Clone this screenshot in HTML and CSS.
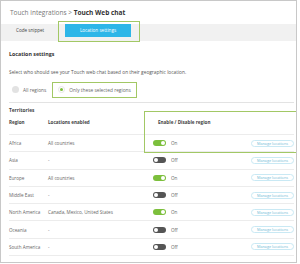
FILE: index.html
```html
<!DOCTYPE html>
<html>
<head>
<meta charset="utf-8">
<link rel="stylesheet" href="styles.css">
</head>
<body>
<div class="frame">
  <div class="title">Touch integrations &gt; <b>Touch Web chat</b></div>
  <div class="tabs">
    <div class="tab">Code snippet</div>
    <div class="tab active">Location settings</div>
  </div>
  <div class="content">
    <div class="h">Location settings</div>
    <div class="desc">Select who should see your Touch web chat based on their geographic location.</div>
    <div class="radios">
      <div class="radio"><span class="dot"></span>All regions</div>
      <div class="radio"><span class="dot on"></span>Only these selected regions</div>
    </div>
    <div class="sep"></div>
    <div class="h2">Territories</div>
    <div class="table">
      <div class="row head"><span class="c1">Region</span><span class="c2">Locations enabled</span><span class="c3">Enable / Disable region</span></div>
      <div class="row"><span class="c1">Africa</span><span class="c2">All countries</span><span class="c3"><span class="tog on"></span>On</span><span class="btn">Manage locations</span></div>
      <div class="row"><span class="c1">Asia</span><span class="c2">-</span><span class="c3"><span class="tog"></span>Off</span><span class="btn">Manage locations</span></div>
      <div class="row"><span class="c1">Europe</span><span class="c2">All countries</span><span class="c3"><span class="tog on"></span>On</span><span class="btn">Manage locations</span></div>
      <div class="row"><span class="c1">Middle East</span><span class="c2">-</span><span class="c3"><span class="tog"></span>Off</span><span class="btn">Manage locations</span></div>
      <div class="row"><span class="c1">North America</span><span class="c2">Canada, Mexico, United States</span><span class="c3"><span class="tog on"></span>On</span><span class="btn">Manage locations</span></div>
      <div class="row"><span class="c1">Oceania</span><span class="c2">-</span><span class="c3"><span class="tog"></span>Off</span><span class="btn">Manage locations</span></div>
      <div class="row"><span class="c1">South America</span><span class="c2">-</span><span class="c3"><span class="tog"></span>Off</span><span class="btn">Manage locations</span></div>
    </div>
  </div>
  <div class="hl hl-tab"></div>
  <div class="hl hl-radio"></div>
  <div class="hl hl-col"></div>
</div>
</body>
</html>
```
FILE: styles.css
```css
* { box-sizing: border-box; }
html, body { margin: 0; padding: 0; background: #fff; }
body { font-family: "Open Sans", "DejaVu Sans", sans-serif; color: #666; }
.frame {
  position: relative;
  width: 297px;
  height: 263px;
  border: 1px solid #c8c8c8;
  overflow: hidden;
}
.title {
  height: 23px;
  padding: 7px 0 0 9px;
  font-size: 6.5px;
  line-height: 9px;
  color: #777;
}
.title b { color: #333; font-weight: 700; }
.tabs {
  height: 17px;
  background: #f1f1f1;
  display: flex;
  align-items: flex-start;
}
.tab {
  font-size: 4.6px;
  line-height: 13px;
  color: #444;
  padding: 0 0 0 15px;
  width: 64px;
}
.tab.active {
  width: 66px;
  padding: 0;
  text-align: center;
  background: #2db6e8;
  color: #fff;
}
.content { padding: 0 0 0 8px; }
.h {
  margin-top: 9px;
  font-size: 5.3px;
  line-height: 8px;
  font-weight: 700;
  color: #333;
}
.desc {
  margin-top: 11px;
  font-size: 4.8px;
  line-height: 7px;
  color: #555;
}
.radios {
  margin-top: 10px;
  display: flex;
  gap: 12px;
  padding-left: 3px;
  height: 7px;
  align-items: center;
}
.radio {
  display: flex;
  align-items: center;
  gap: 4px;
  font-size: 4.8px;
  color: #666;
}
.dot {
  width: 7px; height: 7px; border-radius: 50%;
  background: #e2e2e2;
  display: inline-block;
}
.dot.on { background: #fff; border: 1.5px solid #e6e6e6; position: relative; }
.dot.on::after {
  content: ""; position: absolute; left: 0.5px; top: 0.5px; width: 3px; height: 3px; border-radius: 50%; background: #7cbf3c;
}
.sep {
  margin-top: 9px;
  height: 1px;
  background: #e3e3e3;
  margin-right: 2px;
}
.h2 {
  margin-top: 4px;
  font-size: 4.8px;
  line-height: 7px;
  font-weight: 700;
  color: #444;
}
.table { margin-right: 2px; }
.row {
  display: flex;
  align-items: center;
  height: 17.3px;
  border-bottom: 1px solid #ececec;
  font-size: 4.6px;
  color: #666;
}
.row.head { height: 21px; padding-bottom: 5px; font-weight: 700; color: #444; }
.c1 { width: 39px; }
.c2 { width: 97px; }
.c3 { width: 106px; display: flex; align-items: center; gap: 5px; padding-left: 8px; }
.row.head .c3 { padding-left: 13px; }
.tog {
  display: inline-block;
  width: 13px; height: 6px; border-radius: 3px;
  background: #555;
  position: relative;
}
.tog::after {
  content: ""; position: absolute; top: 1px; left: 1px;
  width: 4px; height: 4px; border-radius: 50%; background: #fff;
}
.tog.on { background: #7cbf3c; }
.tog.on::after { left: 8px; }
.btn {
  width: 43px; height: 7px; border: 1px solid #c9e9f4; border-radius: 4px;
  font-size: 3.8px; line-height: 5px; text-align: center; color: #6fb9d5;
}
.hl { position: absolute; border: 1.5px solid #a2c865; }
.hl-tab { left: 57px; top: 20px; width: 82px; height: 21px; }
.hl-radio { left: 51px; top: 81px; width: 85px; height: 16px; }
.hl-col { left: 143px; top: 110px; width: 154px; height: 42px; }
```
